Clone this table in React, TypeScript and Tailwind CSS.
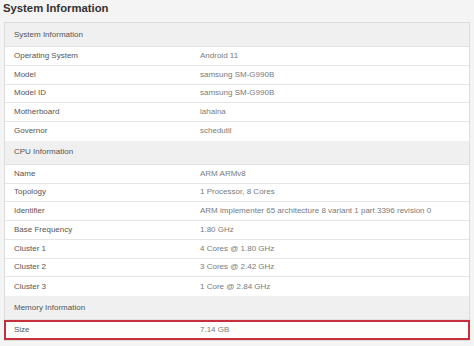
import React from 'react'

interface Row {
  label: string
  value: string
}

interface Section {
  title: string
  rows: Row[]
}

const sections: Section[] = [
  {
    title: 'System Information',
    rows: [
      { label: 'Operating System', value: 'Android 11' },
      { label: 'Model', value: 'samsung SM-G990B' },
      { label: 'Model ID', value: 'samsung SM-G990B' },
      { label: 'Motherboard', value: 'lahaina' },
      { label: 'Governor', value: 'schedutil' },
    ],
  },
  {
    title: 'CPU Information',
    rows: [
      { label: 'Name', value: 'ARM ARMv8' },
      { label: 'Topology', value: '1 Processor, 8 Cores' },
      { label: 'Identifier', value: 'ARM implementer 65 architecture 8 variant 1 part 3396 revision 0' },
      { label: 'Base Frequency', value: '1.80 GHz' },
      { label: 'Cluster 1', value: '4 Cores @ 1.80 GHz' },
      { label: 'Cluster 2', value: '3 Cores @ 2.42 GHz' },
      { label: 'Cluster 3', value: '1 Core @ 2.84 GHz' },
    ],
  },
  {
    title: 'Memory Information',
    rows: [{ label: 'Size', value: '7.14 GB' }],
  },
]

const App: React.FC = () => {
  return (
    <div className="w-[474px] h-[346px] overflow-hidden bg-[#f4f4f4] font-['Liberation_Sans',Arial,sans-serif]">
      <h1 className="h-[22px] pl-[3px] pt-px text-[11.3px] leading-[14px] font-bold text-[#333]">System Information</h1>
      <div className="ml-[4px] w-[466px] border border-[#dcdcdc] bg-white text-[8px]">
        {sections.map((section) => (
          <div key={section.title}>
            <div className="flex items-center h-[24px] pl-[9px] bg-[#f0f0f0] text-[#555] border-b border-[#e2e2e2]">
              {section.title}
            </div>
            {section.rows.map((row) => {
              const highlight = row.label === 'Size'
              return (
                <div
                  key={row.label}
                  className={`flex items-center h-[18.75px] ${
                    highlight
                      ? '-mx-px h-[19.5px] border-2 border-[#c6303e] bg-[#fffdfb]'
                      : 'border-b border-[#e6e6e6] last:border-b-0'
                  }`}
                >
                  <span className={`w-[195px] shrink-0 text-[#555] ${highlight ? 'pl-[8px]' : 'pl-[9px]'}`}>
                    {row.label}
                  </span>
                  <span className={`text-[#7a7a7a] ${highlight ? '-ml-px' : ''}`}>{row.value}</span>
                </div>
              )
            })}
          </div>
        ))}
      </div>
    </div>
  )
}

export default App
